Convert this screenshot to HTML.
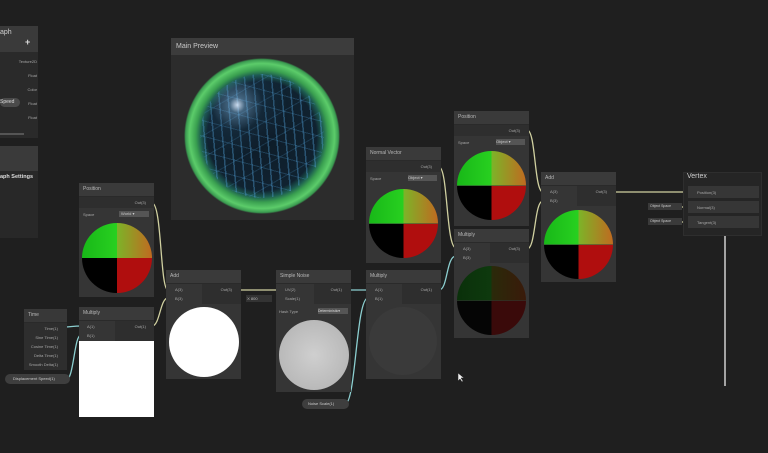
<!DOCTYPE html>
<html><head><style>
body{margin:0;width:768px;height:453px;background:#1f1f1f;overflow:hidden;position:relative;font-family:"Liberation Sans",sans-serif;}
.a{position:absolute}
.n{position:absolute;background:#353535;}
.h{position:absolute;left:0;right:0;top:0;height:13px;background:#3a3a3a;color:#b8b8b8;font-size:5px;line-height:13px;padding-left:4px;border-bottom:1px solid #2a2a2a}
.t{position:absolute;font-size:4px;color:#a8a8a8;}
.s{position:absolute;border-radius:50%;overflow:hidden}
.q{background:
 linear-gradient(to right,transparent 50%,#b00e0e 50%) bottom/100% 50% no-repeat,
 linear-gradient(to right,#000 50%,transparent 50%) bottom/100% 50% no-repeat,
 linear-gradient(to right,#18b818 0,#28d020 50%,#7cb428 50%,#c06a20 100%) top/100% 50% no-repeat;}
.q2{background:
 linear-gradient(to right,transparent 50%,#3a0a0a 50%) bottom/100% 50% no-repeat,
 linear-gradient(to right,#050505 50%,transparent 50%) bottom/100% 50% no-repeat,
 linear-gradient(to right,#0a300a 0,#0e3a0e 50%,#2a2a0a 50%,#3a1a0a 100%) top/100% 50% no-repeat;}
</style></head><body>
<!-- left panels -->
<div class="a" style="left:0;top:26px;width:38px;height:112px;background:#2a2a2a"></div>
<div class="a" style="left:0;top:26px;width:38px;height:26px;background:#3a3a3a"></div>
<div class="a" style="left:0;top:29px;color:#cfcfcf;font-size:7px">aph</div>
<div class="a" style="left:25px;top:37px;color:#ddd;font-size:9px;font-weight:bold">+</div>
<div class="t" style="right:731px;top:59px">Texture2D</div>
<div class="t" style="right:731px;top:73px">Float</div>
<div class="t" style="right:731px;top:87px">Color</div>
<div class="a" style="left:0;top:98px;width:20px;height:9px;border-radius:5px;background:#4a4a4a;color:#ddd;font-size:5px;line-height:9px">Speed</div>
<div class="t" style="right:731px;top:101px">Float</div>
<div class="t" style="right:731px;top:115px">Float</div>
<div class="a" style="left:0;top:133px;width:24px;height:2px;background:#555"></div>
<div class="a" style="left:0;top:146px;width:38px;height:92px;background:#282828"></div>
<div class="a" style="left:0;top:146px;width:38px;height:25px;background:#3a3a3a"></div>
<div class="a" style="left:0;top:174px;color:#ddd;font-size:5.5px;font-weight:bold">aph Settings</div>

<!-- main preview -->
<div class="a" style="left:171px;top:38px;width:183px;height:182px;background:#2c2c2c"></div>
<div class="a" style="left:171px;top:38px;width:183px;height:17px;background:#3c3c3c;color:#c8c8c8;font-size:7px;line-height:17px;padding-left:5px;box-sizing:border-box">Main Preview</div>
<div class="s" style="left:184px;top:58px;width:156px;height:156px;background:radial-gradient(circle closest-side,#0e1c28 0,#102230 70%,#1c5a50 78%,#3aa050 85%,#5ccc6a 93%,#3a9a50 98%,rgba(40,120,60,0) 100%)"></div>
<div class="s" style="left:200px;top:74px;width:124px;height:124px;background:radial-gradient(circle at 30% 25%,rgba(220,235,255,.9) 0,rgba(120,170,210,.5) 6%,rgba(40,80,110,.2) 20%,transparent 40%),repeating-linear-gradient(85deg,rgba(80,160,215,.4) 0 1.5px,transparent 1.5px 9px),repeating-linear-gradient(15deg,rgba(80,160,215,.25) 0 1px,transparent 1px 15px),repeating-linear-gradient(-30deg,rgba(80,160,215,.2) 0 1px,transparent 1px 19px)"></div>

<!-- wires -->
<svg class="a" style="left:0;top:0" width="768" height="453">
<g fill="none" stroke-width="1.3">
<path d="M152 203 C162 203,160 290,168 290" stroke="#d0d0a0"/>
<path d="M64 327 C72 327,72 326,81 326" stroke="#8ccfd0"/>
<path d="M66 380 C74 380,74 335,81 335" stroke="#8ccfd0"/>
<path d="M152 326 C160 326,160 298,168 298" stroke="#d0d0a0"/>
<path d="M239 290 L278 290" stroke="#d0d0a0"/>
<path d="M349 290 L368 290" stroke="#8ccfd0"/>
<path d="M345 404 C356 404,356 298,368 298" stroke="#8ccfd0"/>
<path d="M439 290 C448 290,446 256,456 256" stroke="#8ccfd0"/>
<path d="M439 167 C448 167,446 248,456 248" stroke="#d0d0a0"/>
<path d="M527 130 C536 130,534 192,543 192" stroke="#d0d0a0"/>
<path d="M527 249 C536 249,534 201,543 201" stroke="#d0d0a0"/>
<path d="M614 192 L689 192" stroke="#d0d0a0"/>
<path d="M681 207 L689 207 M681 222 L689 222" stroke="#d0d0a0"/>
<path d="M725 234 L725 386" stroke="#cfcfcf" stroke-width="1.5"/>
</g></svg>

<!-- Position 1 -->
<div class="n" style="left:79px;top:183px;width:75px;height:114px">
<div class="h">Position</div>
<div class="a" style="left:0;top:14px;width:75px;height:11px;background:#2e2e2e"></div>
<div class="t" style="right:8px;top:17px">Out(3)</div>
<div class="t" style="left:4px;top:29px">Space</div>
<div class="a" style="left:40px;top:28px;width:30px;height:6px;background:#555;font-size:4px;color:#ccc;line-height:6px;padding-left:2px;box-sizing:border-box">World ▾</div>
<div class="s q" style="left:3px;top:40px;width:70px;height:70px"></div>
</div>
<!-- Time -->
<div class="n" style="left:24px;top:309px;width:43px;height:61px;background:#2e2e2e">
<div class="h" style="background:#383838">Time</div>
<div class="t" style="right:9px;top:17px">Time(1)</div>
<div class="t" style="right:9px;top:26px">Sine Time(1)</div>
<div class="t" style="right:9px;top:35px">Cosine Time(1)</div>
<div class="t" style="right:9px;top:44px">Delta Time(1)</div>
<div class="t" style="right:9px;top:53px">Smooth Delta(1)</div>
</div>
<div class="a" style="left:5px;top:374px;width:65px;height:10px;border-radius:5px;background:#3e3e3e;font-size:4px;color:#ccc;line-height:10px;padding-left:8px;box-sizing:border-box">Displacement Speed(1)</div>
<!-- Multiply left -->
<div class="n" style="left:79px;top:307px;width:75px;height:110px">
<div class="h">Multiply</div>
<div class="a" style="left:36px;top:14px;width:39px;height:20px;background:#2e2e2e"></div>
<div class="t" style="left:8px;top:17px">A(1)</div><div class="t" style="left:8px;top:26px">B(1)</div>
<div class="t" style="right:8px;top:17px">Out(1)</div>
<div class="a" style="left:0;top:34px;width:75px;height:76px;background:#fff"></div>
</div>
<!-- Add -->
<div class="n" style="left:166px;top:270px;width:75px;height:109px">
<div class="h">Add</div>
<div class="a" style="left:36px;top:14px;width:39px;height:20px;background:#2e2e2e"></div>
<div class="t" style="left:9px;top:17px">A(3)</div><div class="t" style="left:9px;top:26px">B(3)</div>
<div class="t" style="right:9px;top:17px">Out(3)</div>
<div class="s" style="left:3px;top:37px;width:70px;height:70px;background:#fff"></div>
</div>
<div class="a" style="left:246px;top:295px;width:26px;height:7px;background:#333;font-size:4px;color:#bbb;line-height:7px">&nbsp;X 800</div>
<!-- Simple Noise -->
<div class="n" style="left:276px;top:270px;width:75px;height:122px">
<div class="h">Simple Noise</div>
<div class="a" style="left:38px;top:14px;width:37px;height:20px;background:#2e2e2e"></div>
<div class="t" style="left:9px;top:17px">UV(2)</div><div class="t" style="left:9px;top:26px">Scale(1)</div>
<div class="t" style="right:9px;top:17px">Out(1)</div>
<div class="t" style="left:3px;top:39px">Hash Type</div>
<div class="a" style="left:42px;top:38px;width:30px;height:6px;background:#555;font-size:3.5px;color:#ddd;line-height:6px">Deterministic▾</div>
<div class="s" style="left:3px;top:50px;width:70px;height:70px;background:radial-gradient(circle,#cfcfcf,#b0b0b0)"></div>
</div>
<div class="a" style="left:302px;top:399px;width:47px;height:10px;border-radius:5px;background:#3e3e3e;font-size:4px;color:#ccc;line-height:10px;padding-left:6px;box-sizing:border-box">Noise Scale(1)</div>
<!-- Multiply mid -->
<div class="n" style="left:366px;top:270px;width:75px;height:109px">
<div class="h">Multiply</div>
<div class="a" style="left:36px;top:14px;width:39px;height:20px;background:#2e2e2e"></div>
<div class="t" style="left:9px;top:17px">A(1)</div><div class="t" style="left:9px;top:26px">B(1)</div>
<div class="t" style="right:9px;top:17px">Out(1)</div>
<div class="s" style="left:3px;top:37px;width:68px;height:68px;background:#3a3a3a"></div>
</div>
<!-- Normal Vector -->
<div class="n" style="left:366px;top:147px;width:75px;height:116px">
<div class="h">Normal Vector</div>
<div class="a" style="left:0;top:14px;width:75px;height:11px;background:#2e2e2e"></div>
<div class="t" style="right:9px;top:17px">Out(3)</div>
<div class="t" style="left:4px;top:29px">Space</div>
<div class="a" style="left:42px;top:28px;width:29px;height:6px;background:#555;font-size:4px;color:#ccc;line-height:6px">Object ▾</div>
<div class="s q" style="left:3px;top:42px;width:69px;height:69px"></div>
</div>
<!-- Position 2 -->
<div class="n" style="left:454px;top:111px;width:75px;height:115px">
<div class="h">Position</div>
<div class="a" style="left:0;top:14px;width:75px;height:11px;background:#2e2e2e"></div>
<div class="t" style="right:9px;top:17px">Out(3)</div>
<div class="t" style="left:4px;top:29px">Space</div>
<div class="a" style="left:42px;top:28px;width:29px;height:6px;background:#555;font-size:4px;color:#ccc;line-height:6px">Object ▾</div>
<div class="s q" style="left:3px;top:40px;width:69px;height:69px"></div>
</div>
<!-- Multiply 2 -->
<div class="n" style="left:454px;top:229px;width:75px;height:109px">
<div class="h">Multiply</div>
<div class="a" style="left:36px;top:14px;width:39px;height:20px;background:#2e2e2e"></div>
<div class="t" style="left:9px;top:17px">A(3)</div><div class="t" style="left:9px;top:26px">B(3)</div>
<div class="t" style="right:9px;top:17px">Out(3)</div>
<div class="s q2" style="left:3px;top:37px;width:69px;height:69px"></div>
</div>
<!-- Add right -->
<div class="n" style="left:541px;top:172px;width:75px;height:110px">
<div class="h">Add</div>
<div class="a" style="left:36px;top:14px;width:39px;height:20px;background:#2e2e2e"></div>
<div class="t" style="left:9px;top:17px">A(3)</div><div class="t" style="left:9px;top:26px">B(3)</div>
<div class="t" style="right:9px;top:17px">Out(3)</div>
<div class="s q" style="left:3px;top:38px;width:69px;height:69px"></div>
</div>
<!-- Vertex -->
<div class="a" style="left:683px;top:172px;width:77px;height:62px;background:#252525;border:1px solid #2e2e2e"></div>
<div class="a" style="left:687px;top:173px;color:#d0d0d0;font-size:7px">Vertex</div>
<div class="a" style="left:688px;top:186px;width:71px;height:12px;background:#363636"></div>
<div class="a" style="left:688px;top:201px;width:71px;height:12px;background:#363636"></div>
<div class="a" style="left:688px;top:216px;width:71px;height:12px;background:#363636"></div>
<div class="t" style="left:697px;top:190px">Position(3)</div>
<div class="t" style="left:697px;top:205px">Normal(3)</div>
<div class="t" style="left:697px;top:220px">Tangent(3)</div>
<div class="a" style="left:648px;top:203px;width:34px;height:7px;background:#3a3a3a;font-size:3.5px;color:#ccc;line-height:7px;padding-left:2px;box-sizing:border-box">Object Space</div>
<div class="a" style="left:648px;top:218px;width:34px;height:7px;background:#3a3a3a;font-size:3.5px;color:#ccc;line-height:7px;padding-left:2px;box-sizing:border-box">Object Space</div>
<!-- cursor -->
<svg class="a" style="left:457px;top:372px" width="8" height="11"><path d="M1 1 L1 9 L3 7 L5 10 L6 9 L4 6 L7 6 Z" fill="#eee" stroke="#222" stroke-width=".5"/></svg>
</body></html>
